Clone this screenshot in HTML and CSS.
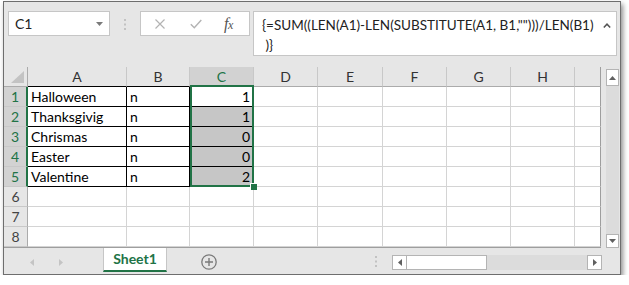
FILE: index.html
```html
<!DOCTYPE html>
<html>
<head>
<meta charset="utf-8">
<link rel="stylesheet" href="styles.css">
</head>
<body>
<div class="window">
  <div class="toolbar">
    <div class="namebox">
      <span class="nb-text">C1</span>
      <svg class="nb-drop" width="7" height="4" viewBox="0 0 7 4"><polygon points="0,0 7,0 3.5,4" fill="#7a7a7a"/></svg>
    </div>
    <div class="vdots">
      <svg width="2" height="11" viewBox="0 0 2 11"><rect x="0" y="0" width="2" height="2" fill="#c2c2c2"/><rect x="0" y="4.5" width="2" height="2" fill="#c2c2c2"/><rect x="0" y="9" width="2" height="2" fill="#c2c2c2"/></svg>
    </div>
    <div class="fbtns">
      <svg class="ic-x" width="10" height="10" viewBox="0 0 10 10"><path d="M0.5 0.5 L9.5 9.5 M9.5 0.5 L0.5 9.5" stroke="#b3b3b3" stroke-width="1.2" fill="none"/></svg>
      <svg class="ic-ok" width="12" height="10" viewBox="0 0 12 10"><path d="M0.8 5.2 L4.3 8.8 L11.3 1" stroke="#b3b3b3" stroke-width="1.4" fill="none"/></svg>
      <span class="ic-fx">f<span class="fx-x">x</span></span>
    </div>
    <div class="formula">
      <div class="ftext">
        <div class="fline">{=SUM((LEN(A1)-LEN(SUBSTITUTE(A1, B1,"")))/LEN(B1)</div>
        <div class="fline"> )}</div>
      </div>
      <svg class="fcaret" width="8" height="5" viewBox="0 0 8 5"><path d="M0.8 4.5 L4 1.2 L7.2 4.5" stroke="#555" stroke-width="1.5" fill="none"/></svg>
    </div>
  </div>

  <div class="main">
    <div class="grid">
      <div class="ch corner"><svg width="13" height="12" viewBox="0 0 13 12"><polygon points="13,0 13,12 0,12" fill="#c3c3c3"/></svg></div>
      <div class="ch blk">A</div>
      <div class="ch blk">B</div>
      <div class="ch sel">C</div>
      <div class="ch">D</div>
      <div class="ch">E</div>
      <div class="ch">F</div>
      <div class="ch">G</div>
      <div class="ch">H</div>
      <div class="ch last"></div>

      <div class="rh sel">1</div>
      <div class="cell b">Halloween</div>
      <div class="cell b">n</div>
      <div class="cell b num">1</div>
      <div class="cell"></div><div class="cell"></div><div class="cell"></div><div class="cell"></div><div class="cell"></div><div class="cell last"></div>

      <div class="rh sel">2</div>
      <div class="cell b">Thanksgivig</div>
      <div class="cell b">n</div>
      <div class="cell b num gray">1</div>
      <div class="cell"></div><div class="cell"></div><div class="cell"></div><div class="cell"></div><div class="cell"></div><div class="cell last"></div>

      <div class="rh sel">3</div>
      <div class="cell b">Chrismas</div>
      <div class="cell b">n</div>
      <div class="cell b num gray">0</div>
      <div class="cell"></div><div class="cell"></div><div class="cell"></div><div class="cell"></div><div class="cell"></div><div class="cell last"></div>

      <div class="rh sel">4</div>
      <div class="cell b">Easter</div>
      <div class="cell b">n</div>
      <div class="cell b num gray">0</div>
      <div class="cell"></div><div class="cell"></div><div class="cell"></div><div class="cell"></div><div class="cell"></div><div class="cell last"></div>

      <div class="rh sel">5</div>
      <div class="cell b">Valentine</div>
      <div class="cell b">n</div>
      <div class="cell b num gray">2</div>
      <div class="cell"></div><div class="cell"></div><div class="cell"></div><div class="cell"></div><div class="cell"></div><div class="cell last"></div>

      <div class="rh">6</div>
      <div class="cell"></div><div class="cell"></div><div class="cell"></div><div class="cell"></div><div class="cell"></div><div class="cell"></div><div class="cell"></div><div class="cell"></div><div class="cell last"></div>

      <div class="rh">7</div>
      <div class="cell"></div><div class="cell"></div><div class="cell"></div><div class="cell"></div><div class="cell"></div><div class="cell"></div><div class="cell"></div><div class="cell"></div><div class="cell last"></div>

      <div class="rh">8</div>
      <div class="cell"></div><div class="cell"></div><div class="cell"></div><div class="cell"></div><div class="cell"></div><div class="cell"></div><div class="cell"></div><div class="cell"></div><div class="cell last"></div>

      <div class="selection"></div>
      <div class="handle"></div>
    </div>

    <div class="vscroll">
      <div class="sbtn up"><svg width="7" height="4" viewBox="0 0 7 4"><polygon points="0,4 7,4 3.5,0" fill="#606060"/></svg></div>
      <div class="vtrack"></div>
      <div class="sbtn down"><svg width="7" height="4" viewBox="0 0 7 4"><polygon points="0,0 7,0 3.5,4" fill="#606060"/></svg></div>
    </div>
  </div>

  <div class="sheetbar">
    <div class="navs">
      <svg width="4" height="7" viewBox="0 0 4 7"><polygon points="4,0 4,7 0,3.5" fill="#c4c4c4"/></svg>
      <svg width="4" height="7" viewBox="0 0 4 7"><polygon points="0,0 0,7 4,3.5" fill="#c4c4c4"/></svg>
    </div>
    <div class="tab">Sheet1</div>
    <svg class="addsheet" width="16" height="16" viewBox="0 0 16 16"><circle cx="8" cy="8" r="7.2" stroke="#7a7a7a" stroke-width="1.3" fill="none"/><path d="M8 4 V12 M4 8 H12" stroke="#7a7a7a" stroke-width="1.4"/></svg>
    <svg class="hdots" width="2" height="11" viewBox="0 0 2 11"><rect x="0" y="0" width="2" height="2" fill="#c2c2c2"/><rect x="0" y="4.5" width="2" height="2" fill="#c2c2c2"/><rect x="0" y="9" width="2" height="2" fill="#c2c2c2"/></svg>
    <div class="hscroll">
      <div class="hbtn"><svg width="4" height="7" viewBox="0 0 4 7"><polygon points="4,0 4,7 0,3.5" fill="#606060"/></svg></div>
      <div class="hthumb"></div>
      <div class="htrack"></div>
      <div class="hbtn"><svg width="4" height="7" viewBox="0 0 4 7"><polygon points="0,0 0,7 4,3.5" fill="#606060"/></svg></div>
    </div>
  </div>
</div>
</body>
</html>
```

FILE: styles.css
```css
html, body {
  margin: 0;
  padding: 0;
  background: #ffffff;
}

.window {
  margin: 1px 0 0 3px;
  width: 618px;
  height: 274px;
  box-sizing: border-box;
  border: 1px solid #6e6e6e;
  background: #e6e6e6;
  box-shadow: 2px 3px 5px rgba(0, 0, 0, 0.45);
  display: flex;
  flex-direction: column;
  font-family: "Lato", "Liberation Sans", sans-serif;
}

/* ---------- toolbar ---------- */
.toolbar {
  height: 65px;
  flex: none;
  box-sizing: border-box;
  padding: 9px 0 0 4px;
  display: flex;
  align-items: flex-start;
}

.namebox {
  width: 102px;
  height: 25px;
  box-sizing: border-box;
  border: 1px solid #c6c6c6;
  background: #fff;
  display: flex;
  align-items: center;
  justify-content: space-between;
  padding: 0 6px 0 6px;
}

.nb-text {
  font-size: 14px;
  color: #222;
}

.vdots {
  width: 30px;
  display: flex;
  justify-content: center;
  padding-top: 8px;
}

.fbtns {
  width: 110px;
  height: 25px;
  box-sizing: border-box;
  border: 1px solid #c6c6c6;
  background: #fff;
  display: flex;
  align-items: center;
}

.ic-x {
  margin-left: 14px;
}

.ic-ok {
  margin-left: 25px;
}

.ic-fx {
  margin-left: 22px;
  font-family: "Liberation Serif", serif;
  font-style: italic;
  font-size: 16px;
  color: #555;
  letter-spacing: -0.5px;
}

.fx-x {
  font-size: 12px;
}

.formula {
  margin-left: 3px;
  width: 364px;
  height: 45px;
  box-sizing: border-box;
  border: 1px solid #c6c6c6;
  background: #fff;
  display: flex;
  justify-content: space-between;
  align-items: flex-start;
  padding: 3px 5px 0 8px;
}

.fline {
  font-size: 13.5px;
  line-height: 20px;
  color: #222;
  white-space: pre;
}

.fcaret {
  margin-top: 8px;
}

/* ---------- main grid ---------- */
.main {
  height: 181px;
  flex: none;
  display: flex;
}

.grid {
  position: relative;
  width: 597px;
  height: 181px;
  box-sizing: border-box;
  border-bottom: 1px solid #9e9e9e;
  display: grid;
  grid-template-columns: 24px 99px 63px 64px 64px 65px 64px 64px 64px 26px;
  grid-template-rows: repeat(9, 20px);
  overflow: hidden;
  background: #fff;
  font-size: 14px;
}

.grid > div {
  box-sizing: border-box;
}

.ch {
  background: #e6e6e6;
  border-right: 1px solid #c8c8c8;
  border-bottom: 1px solid #ababab;
  text-align: center;
  color: #333;
  line-height: 19px;
  font-size: 14px;
}

.ch.corner {
  display: flex;
  align-items: flex-end;
  justify-content: flex-end;
  padding: 0 3px 3px 0;
  border-right-color: #ababab;
}

.ch.blk {
  border-bottom-color: #000;
}

.ch.sel {
  background: #d2d2d2;
  color: #217346;
  border-bottom: 2px solid #217346;
}

.ch.last {
  border-right-color: #9e9e9e;
}

.rh {
  background: #e6e6e6;
  border-right: 1px solid #ababab;
  border-bottom: 1px solid #c8c8c8;
  text-align: center;
  color: #444;
  line-height: 20px;
  font-size: 14px;
}

.rh.sel {
  background: #d2d2d2;
  color: #217346;
  border-right: 2px solid #217346;
}

.cell {
  border-right: 1px solid #d4d4d4;
  border-bottom: 1px solid #d4d4d4;
  padding: 0 3px;
  line-height: 20px;
  color: #000;
  white-space: nowrap;
  overflow: hidden;
}

.cell.last {
  border-right-color: #9e9e9e;
}

.cell.b {
  border-right-color: #000;
  border-bottom-color: #000;
}

.cell.num {
  text-align: right;
  padding-right: 3px;
}

.cell.gray {
  background: #c6c6c6;
}

.selection {
  position: absolute;
  left: 186px;
  top: 18px;
  width: 64px;
  height: 102px;
  box-sizing: border-box;
  border: 2px solid #217346;
  pointer-events: none;
}

.handle {
  position: absolute;
  left: 247px;
  top: 117px;
  width: 6px;
  height: 6px;
  background: #217346;
  box-shadow: -1px -1px 0 0 #fff;
}

/* ---------- vertical scrollbar ---------- */
.vscroll {
  margin-left: 5px;
  margin-top: 2px;
  width: 13px;
  height: 179px;
  display: flex;
  flex-direction: column;
  background: #dcdcdc;
}

.sbtn {
  box-sizing: border-box;
  border: 1px solid #b4b4b4;
  background: #fff;
  display: flex;
  align-items: center;
  justify-content: center;
}

.sbtn.up {
  height: 17px;
}

.sbtn.down {
  height: 14px;
}

.vtrack {
  flex: 1;
}

/* ---------- sheet bar ---------- */
.sheetbar {
  flex: 1;
  display: flex;
  align-items: flex-start;
}

.navs {
  width: 99px;
  height: 24px;
  box-sizing: border-box;
  padding: 11px 0 0 26px;
  display: flex;
  align-items: flex-start;
  gap: 25px;
}

.tab {
  width: 64px;
  height: 24px;
  box-sizing: border-box;
  background: #fff;
  border-left: 1px solid #c6c6c6;
  border-right: 1px solid #c6c6c6;
  border-bottom: 2px solid #217346;
  color: #217346;
  font-weight: bold;
  font-size: 14px;
  text-align: center;
  line-height: 22px;
}

.addsheet {
  margin-left: 34px;
  margin-top: 6px;
}

.hdots {
  margin-left: 158px;
  margin-top: 8px;
}

.hscroll {
  margin-left: 15px;
  margin-top: 7px;
  width: 210px;
  height: 15px;
  display: flex;
  background: #dcdcdc;
}

.hbtn {
  width: 15px;
  height: 15px;
  box-sizing: border-box;
  border: 1px solid #b4b4b4;
  background: #fff;
  display: flex;
  align-items: center;
  justify-content: center;
}

.hthumb {
  width: 80px;
  height: 15px;
  box-sizing: border-box;
  border: 1px solid #b4b4b4;
  border-left: none;
  background: #fff;
}

.htrack {
  flex: 1;
}
```
